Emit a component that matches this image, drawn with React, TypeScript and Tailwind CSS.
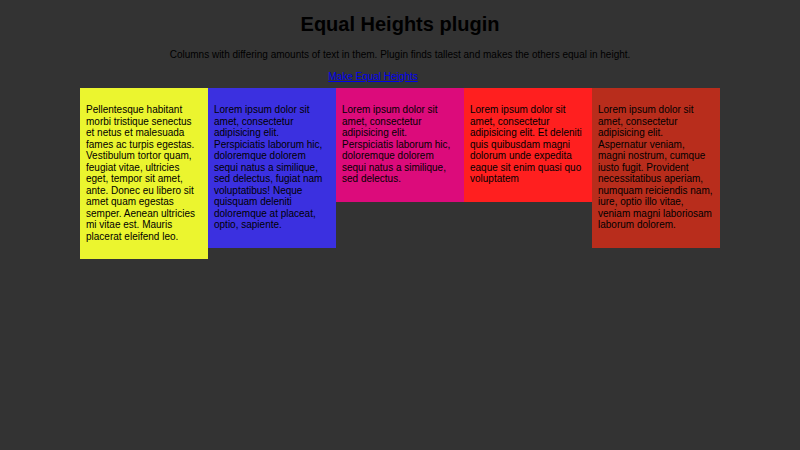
const columns = [
  {
    bg: 'bg-[#ebf52f]',
    text: 'Pellentesque habitant morbi tristique senectus et netus et malesuada fames ac turpis egestas. Vestibulum tortor quam, feugiat vitae, ultricies eget, tempor sit amet, ante. Donec eu libero sit amet quam egestas semper. Aenean ultricies mi vitae est. Mauris placerat eleifend leo.',
  },
  {
    bg: 'bg-[#3b30e0]',
    text: 'Lorem ipsum dolor sit amet, consectetur adipisicing elit. Perspiciatis laborum hic, doloremque dolorem sequi natus a similique, sed delectus, fugiat nam voluptatibus! Neque quisquam deleniti doloremque at placeat, optio, sapiente.',
  },
  {
    bg: 'bg-[#dc0b7b]',
    text: 'Lorem ipsum dolor sit amet, consectetur adipisicing elit. Perspiciatis laborum hic, doloremque dolorem sequi natus a similique, sed delectus.',
  },
  {
    bg: 'bg-[#ff1f1f]',
    text: 'Lorem ipsum dolor sit amet, consectetur adipisicing elit. Et deleniti quis quibusdam magni dolorum unde expedita eaque sit enim quasi quo voluptatem',
  },
  {
    bg: 'bg-[#b82d1c]',
    text: 'Lorem ipsum dolor sit amet, consectetur adipisicing elit. Aspernatur veniam, magni nostrum, cumque iusto fugit. Provident necessitatibus aperiam, numquam reiciendis nam, iure, optio illo vitae, veniam magni laboriosam laborum dolorem.',
  },
];

const App = () => {
  return (
    <div className="min-h-[450px] w-full bg-[#333333] text-[10px] leading-[11.5px] text-black font-['Liberation_Sans',Arial,sans-serif] pt-[13px]">
      {/* Header */}
      <h1 className="text-center text-[20px] font-bold leading-[23px] text-black">
        Equal Heights plugin
      </h1>
      <p className="mt-[13px] text-center">
        Columns with differing amounts of text in them. Plugin finds tallest and makes the others equal in height.
      </p>
      <p className="mt-[10px] pr-[54px] text-center">
        <a href="#" className="text-[#0000ee] underline">
          Make Equal Heights
        </a>
      </p>

      {/* Columns */}
      <div className="mt-[6px] flex items-start justify-center">
        {columns.map((col, idx) => (
          <div key={idx} className={`w-[128px] px-[6px] pt-[6px] pb-[7px] ${col.bg}`}>
            <p className="my-[10px]">{col.text}</p>
          </div>
        ))}
      </div>
    </div>
  );
};

export default App;
